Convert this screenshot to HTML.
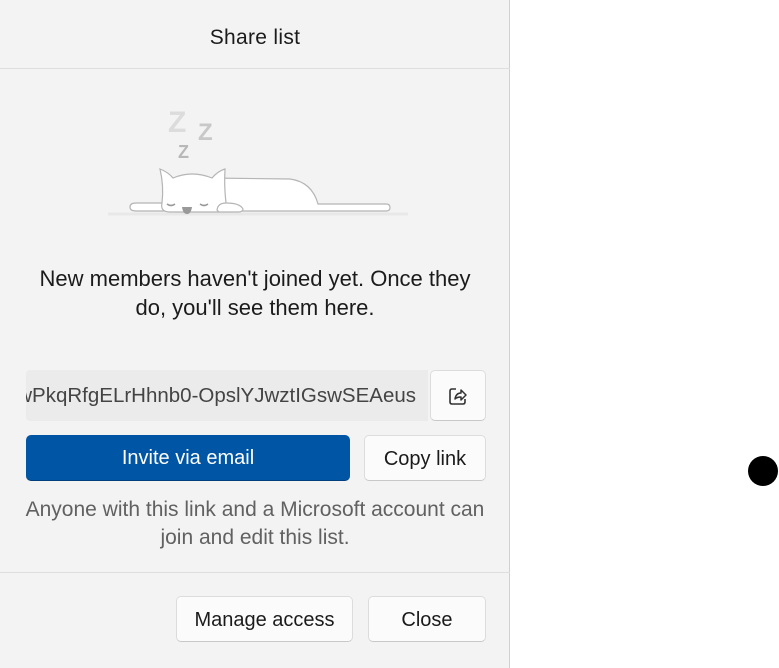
<!DOCTYPE html>
<html><head><style>
body{margin:0;width:779px;height:668px;background:#fff;position:relative;font-family:"Liberation Sans",sans-serif;overflow:hidden}
.dlg{position:absolute;left:0;top:0;width:510px;height:668px;background:#f3f3f3;border-right:1px solid #d0d0d0;box-sizing:border-box}
.t{position:absolute;left:0;width:510px;text-align:center;color:#1b1b1b}
.sep{position:absolute;left:0;width:510px;height:1px;background:#dedede}
.btn{position:absolute;background:#fbfbfb;border:1px solid #dcdcdc;border-bottom-color:#c8c8c8;border-radius:5px;box-sizing:border-box;font-size:20px;color:#1b1b1b;text-align:center}
</style></head><body>
<div class="dlg">
<div class="t" style="top:26px;font-size:21px;letter-spacing:0.3px">Share list</div>
<div class="sep" style="top:68px"></div>
<svg style="position:absolute;left:100px;top:100px" width="320" height="120" viewBox="0 0 320 120">
<text x="68" y="32" font-family="Liberation Sans" font-weight="bold" font-size="30" fill="#dcdcdc">Z</text>
<text x="98" y="40" font-family="Liberation Sans" font-weight="bold" font-size="24" fill="#c8c8c8">Z</text>
<text x="78" y="58" font-family="Liberation Sans" font-weight="bold" font-size="18" fill="#b8b8b8">Z</text>
<line x1="8" y1="114" x2="308" y2="114" stroke="#e8e8e8" stroke-width="3"/>
<path d="M110 78 L190 79 Q212 82 218 104 H286 Q290 104 290 107.5 Q290 111 286 111 H36 Q30 111 30 107 Q30 103 36 103 H62 Z" fill="#fff" stroke="#b5b5b5" stroke-width="1.2"/>
<path d="M60 69 Q64 86 62 103 Q60 112 70 112 H118 Q128 112 126 103 Q124 86 125 69 Q118 71 112 78 Q92 70 73 78 Q68 72 60 69 Z" fill="#fff" stroke="#b5b5b5" stroke-width="1.2"/>
<path d="M117 110 Q118 103 126 103 Q140 103 143 109 Q143 112 138 112 H119 Z" fill="#fff" stroke="#b5b5b5" stroke-width="1.2"/>
<path d="M67 104 Q71 107 75 104 M100 104 Q104 107 108 104" stroke="#999" stroke-width="1.6" fill="none"/>
<path d="M82 107 H92 Q91 114 87 114 Q83 114 82 107 Z" fill="#999"/>
</svg>
<div class="t" style="top:264px;font-size:22px;line-height:29px;">New members haven't joined yet. Once they<br>do, you'll see them here.</div>
<div style="position:absolute;left:26px;top:370px;width:402px;height:51px;background:#ebebeb;overflow:hidden;border-radius:4px 0 0 4px">
<div style="position:absolute;right:12px;top:14px;font-size:20.5px;color:#444;white-space:nowrap">wPkqRfgELrHhnb0-OpslYJwztIGswSEAeus</div></div>
<div class="btn" style="left:430px;top:370px;width:56px;height:51px">
<svg width="22" height="22" viewBox="0 0 22 22" style="margin-top:14px"><path d="M9 4 H5 Q3 4 3 6 V17 Q3 19 5 19 H16 Q18 19 18 17 V14" stroke="#333" stroke-width="1.6" fill="none"/><path d="M8 14 Q9 8 14 8 V5 L19 10 L14 15 V12 Q10 12 8 14 Z" stroke="#333" stroke-width="1.5" fill="none" stroke-linejoin="round"/></svg></div>
<div style="position:absolute;left:26px;top:435px;width:324px;height:46px;background:#0055a5;border-radius:5px;border-bottom:1px solid #003e7e;box-sizing:border-box;color:#fff;font-size:20px;text-align:center;line-height:46px">Invite via email</div>
<div class="btn" style="left:364px;top:435px;width:122px;height:46px;line-height:46px">Copy link</div>
<div class="t" style="top:496px;font-size:21px;line-height:28px;color:#616161">Anyone with this link and a Microsoft account can<br>join and edit this list.</div>
<div class="sep" style="top:572px"></div>
<div class="btn" style="left:176px;top:596px;width:177px;height:46px;line-height:46px">Manage access</div>
<div class="btn" style="left:368px;top:596px;width:118px;height:46px;line-height:46px">Close</div>
</div>
<div style="position:absolute;left:748px;top:456px;width:30px;height:30px;border-radius:50%;background:#000"></div>
</body></html>
